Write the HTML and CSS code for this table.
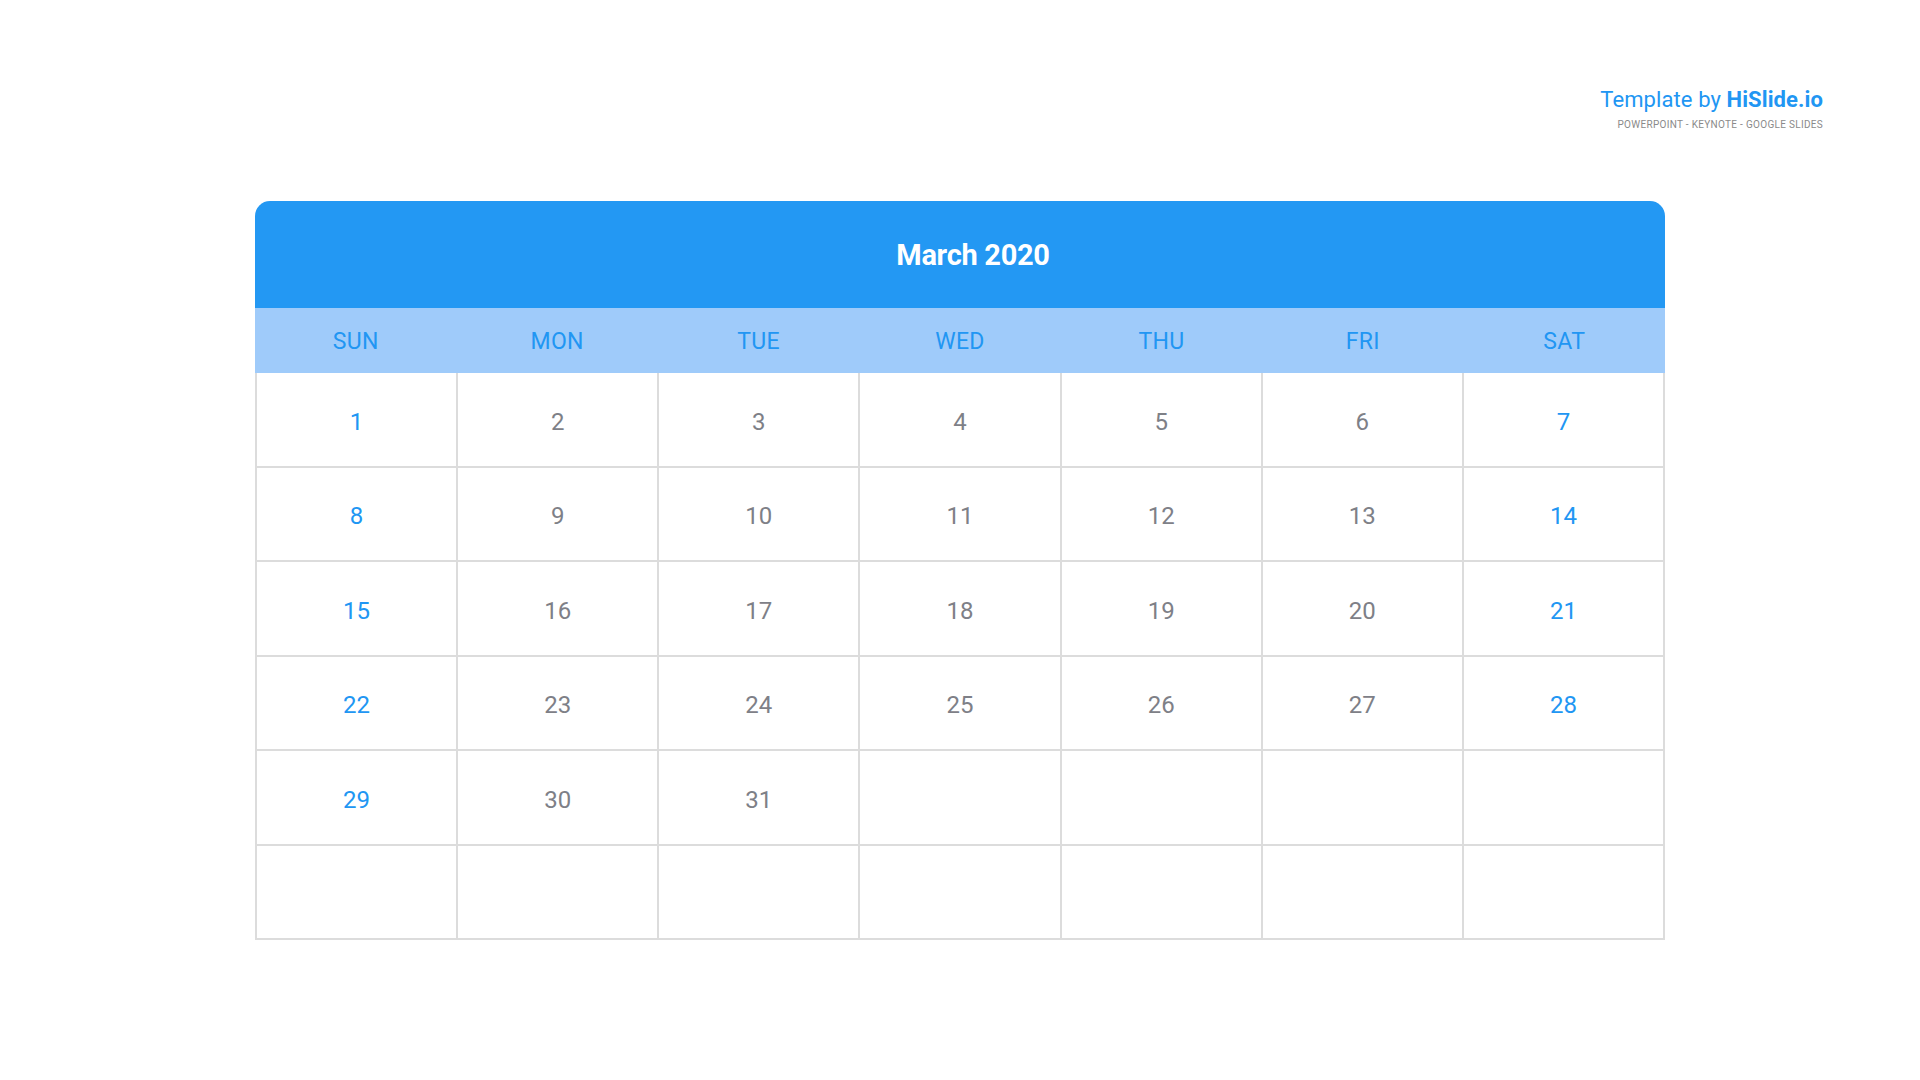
FILE: index.html
```html
<!DOCTYPE html>
<html>
<head>
<meta charset="utf-8">
<link rel="stylesheet" href="styles.css">
</head>
<body>
<div class="page">
  <div class="brand">
    <div class="brand-title">Template by <b>HiSlide.io</b></div>
    <div class="brand-sub">POWERPOINT - KEYNOTE - GOOGLE SLIDES</div>
  </div>
  <div class="calendar">
    <div class="cal-head">March 2020</div>
    <div class="weekdays">
      <div>SUN</div><div>MON</div><div>TUE</div><div>WED</div><div>THU</div><div>FRI</div><div>SAT</div>
    </div>
    <div class="grid">
      <div class="cell we">1</div><div class="cell">2</div><div class="cell">3</div><div class="cell">4</div><div class="cell">5</div><div class="cell">6</div><div class="cell we">7</div>
      <div class="cell we">8</div><div class="cell">9</div><div class="cell">10</div><div class="cell">11</div><div class="cell">12</div><div class="cell">13</div><div class="cell we">14</div>
      <div class="cell we">15</div><div class="cell">16</div><div class="cell">17</div><div class="cell">18</div><div class="cell">19</div><div class="cell">20</div><div class="cell we">21</div>
      <div class="cell we">22</div><div class="cell">23</div><div class="cell">24</div><div class="cell">25</div><div class="cell">26</div><div class="cell">27</div><div class="cell we">28</div>
      <div class="cell we">29</div><div class="cell">30</div><div class="cell">31</div><div class="cell"></div><div class="cell"></div><div class="cell"></div><div class="cell"></div>
      <div class="cell"></div><div class="cell"></div><div class="cell"></div><div class="cell"></div><div class="cell"></div><div class="cell"></div><div class="cell"></div>
    </div>
  </div>
</div>
</body>
</html>
```
FILE: styles.css
```css
html, body {
  margin: 0;
  padding: 0;
  background: #ffffff;
}
body {
  font-family: Roboto, "Liberation Sans", sans-serif;
  width: 1920px;
  height: 1080px;
  overflow: hidden;
}
.page {
  display: flex;
  flex-direction: column;
  padding: 87px 97px 0 255px;
}
.brand {
  align-self: flex-end;
  display: flex;
  flex-direction: column;
  align-items: flex-end;
  height: 114px;
}
.brand-title {
  font-size: 22px;
  color: #2196f3;
  line-height: 26px;
  letter-spacing: 0.1px;
}
.brand-title b {
  font-weight: 700;
}
.brand-sub {
  font-size: 10px;
  color: #8a8a8a;
  margin-top: 6px;
  letter-spacing: 0.3px;
}
.calendar {
  width: 1410px;
  display: flex;
  flex-direction: column;
}
.cal-head {
  height: 107px;
  background: #2398f3;
  border-radius: 15px 15px 0 0;
  color: #ffffff;
  font-size: 29px;
  font-weight: 700;
  display: flex;
  align-items: center;
  justify-content: center;
  padding-left: 26px;
  letter-spacing: -0.3px;
}
.weekdays {
  height: 65px;
  background: #9fcbfa;
  display: grid;
  grid-template-columns: repeat(7, 1fr);
}
.weekdays div {
  display: flex;
  align-items: center;
  justify-content: center;
  padding-top: 2px;
  color: #2196f3;
  font-size: 23px;
  letter-spacing: 0.3px;
}
.grid {
  display: grid;
  grid-template-columns: repeat(7, 1fr);
  grid-auto-rows: 94.5px;
  border-left: 2px solid #dcdcdc;
}
.cell {
  border-right: 2px solid #dcdcdc;
  border-bottom: 2px solid #dcdcdc;
  display: flex;
  align-items: center;
  justify-content: center;
  padding-top: 5px;
  font-size: 24px;
  color: #7e8087;
}
.cell.we {
  color: #2196f3;
}
```
